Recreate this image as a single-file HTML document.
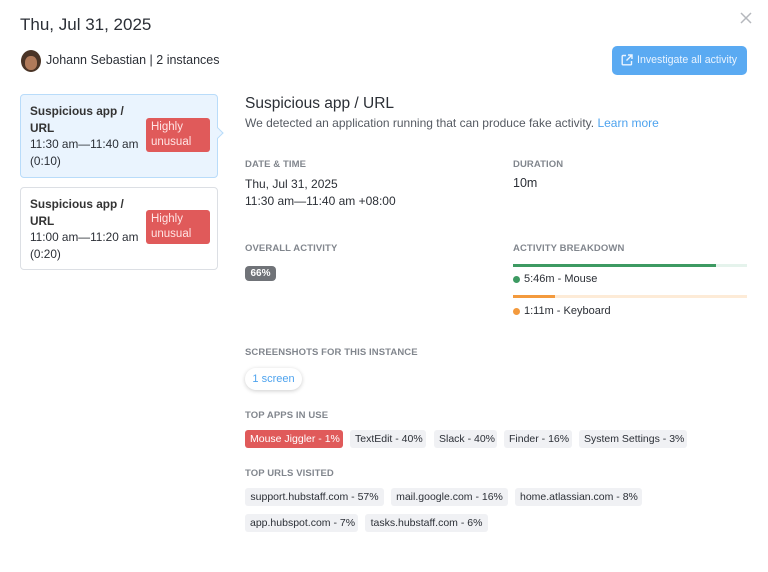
<!DOCTYPE html><html><head><style>
*{margin:0;padding:0;box-sizing:border-box}
body{width:768px;height:572px;background:#fff;font-family:"Liberation Sans",sans-serif;color:#2b2f36;position:relative;overflow:hidden}
.a{position:absolute;white-space:nowrap}
.lbl{font-size:9.5px;color:#6c717a;font-weight:bold;letter-spacing:.1px;opacity:.85}
.card{position:absolute;left:20px;width:198px;border:1px solid #dcdfe4;border-radius:4px;font-size:11.8px;line-height:16.5px;padding:8px 9px;white-space:nowrap}
.card b{font-weight:bold;color:#333}
.badge{position:absolute;left:125px;width:64px;height:34px;background:#e05a5a;border-radius:3px;font-size:11.5px;line-height:15px;padding:2px 5px;color:#ffe4e4}
.tag{position:absolute;height:18px;background:#f0f1f4;border-radius:3px;font-size:10.5px;line-height:18px;padding:0 5px;color:#2b2f36;white-space:nowrap;overflow:hidden;text-align:center}
</style></head><body>
<div class="a" style="left:20px;top:15px;font-size:17px;font-weight:500">Thu, Jul 31, 2025</div>
<svg class="a" style="left:740px;top:12px" width="12" height="12"><path d="M1 1L11 11M11 1L1 11" stroke="#b5b8bd" stroke-width="1.5"/></svg>
<div class="a" style="left:21px;top:50px;width:20px;height:22px;border-radius:50%;background:#4a3426;overflow:hidden"><div style="position:absolute;left:4px;top:6px;width:12px;height:14px;border-radius:45%;background:#b07a5a"></div></div>
<div class="a" style="left:46px;top:53px;font-size:12.5px;color:#2b2f36">Johann Sebastian | 2 instances</div>
<div class="a" style="left:612px;top:46px;width:135px;height:29px;background:#5aaaf2;border-radius:5px;color:#eaf4ff;font-size:10.6px;line-height:29px;padding-left:25px">Investigate all activity</div>
<svg class="a" style="left:621px;top:54px" width="12" height="12"><path d="M5 1.5H2a.8.8 0 0 0-.8.8v7.7a.8.8 0 0 0 .8.8h7.7a.8.8 0 0 0 .8-.8V7M7 1h4v4M11 1L5.5 6.5" stroke="#eaf4ff" stroke-width="1.4" fill="none"/></svg>
<div class="card" style="top:94px;height:84px;background:#eaf4fe;border-color:#b9dcfa"><b>Suspicious app /<br>URL</b><br>11:30 am—11:40 am<br>(0:10)<div class="badge" style="top:23px">Highly<br>unusual</div></div>
<div class="a" style="left:214px;top:129px;width:8px;height:8px;background:#eaf4fe;border-right:1px solid #b9dcfa;border-top:1px solid #b9dcfa;transform:rotate(45deg)"></div>
<div class="card" style="top:187px;height:83px"><b>Suspicious app /<br>URL</b><br>11:00 am—11:20 am<br>(0:20)<div class="badge" style="top:22px">Highly<br>unusual</div></div>
<div class="a" style="left:245px;top:95px;font-size:15.5px;font-weight:500">Suspicious app / URL</div>
<div class="a" style="left:245px;top:116px;font-size:12px;color:#555a62">We detected an application running that can produce fake activity. <span style="color:#4ea3ee">Learn more</span></div>
<div class="a lbl" style="left:245px;top:159px">DATE &amp; TIME</div>
<div class="a" style="left:245px;top:176px;font-size:12px;line-height:16.5px">Thu, Jul 31, 2025<br>11:30 am—11:40 am +08:00</div>
<div class="a lbl" style="left:513px;top:159px">DURATION</div>
<div class="a" style="left:513px;top:176px;font-size:12.5px">10m</div>
<div class="a lbl" style="left:245px;top:243px">OVERALL ACTIVITY</div>
<div class="a" style="left:245px;top:266px;width:31px;height:15px;background:#707378;color:#fff;border-radius:4px;font-size:10px;line-height:15px;text-align:center;font-weight:bold">66%</div>
<div class="a lbl" style="left:513px;top:243px">ACTIVITY BREAKDOWN</div>
<div class="a" style="left:513px;top:264px;width:234px;height:3px;background:#e5f3ec"><div style="width:203px;height:3px;background:#3d9a62"></div></div>
<div class="a" style="left:513px;top:276px;width:7px;height:7px;border-radius:50%;background:#3d9a62"></div>
<div class="a" style="left:524px;top:273px;font-size:11px">5:46m - Mouse</div>
<div class="a" style="left:513px;top:295px;width:234px;height:3px;background:#fdebd7"><div style="width:42px;height:3px;background:#f39a3d"></div></div>
<div class="a" style="left:513px;top:308px;width:7px;height:7px;border-radius:50%;background:#f39a3d"></div>
<div class="a" style="left:524px;top:305px;font-size:11px">1:11m - Keyboard</div>
<div class="a lbl" style="left:245px;top:347px">SCREENSHOTS FOR THIS INSTANCE</div>
<div class="a" style="left:245px;top:368px;width:57px;height:22px;border-radius:11px;background:#fff;box-shadow:0 1px 4px rgba(0,0,0,.2);color:#4ea3ee;font-size:11px;line-height:22px;text-align:center">1 screen</div>
<div class="a lbl" style="left:245px;top:410px">TOP APPS IN USE</div>
<div class="tag" style="left:245px;top:430px;width:98px;background:#e05a5a;color:#fff">Mouse Jiggler - 1%</div>
<div class="tag" style="left:350px;top:430px;width:76px">TextEdit - 40%</div>
<div class="tag" style="left:434px;top:430px;width:63px">Slack - 40%</div>
<div class="tag" style="left:504px;top:430px;width:68px">Finder - 16%</div>
<div class="tag" style="left:579px;top:430px;width:108px">System Settings - 3%</div>
<div class="a lbl" style="left:245px;top:468px">TOP URLS VISITED</div>
<div class="tag" style="left:245px;top:488px;width:139px">support.hubstaff.com - 57%</div>
<div class="tag" style="left:391px;top:488px;width:117px">mail.google.com - 16%</div>
<div class="tag" style="left:515px;top:488px;width:127px">home.atlassian.com - 8%</div>
<div class="tag" style="left:245px;top:514px;width:113px">app.hubspot.com - 7%</div>
<div class="tag" style="left:365px;top:514px;width:123px">tasks.hubstaff.com - 6%</div>
</body></html>
